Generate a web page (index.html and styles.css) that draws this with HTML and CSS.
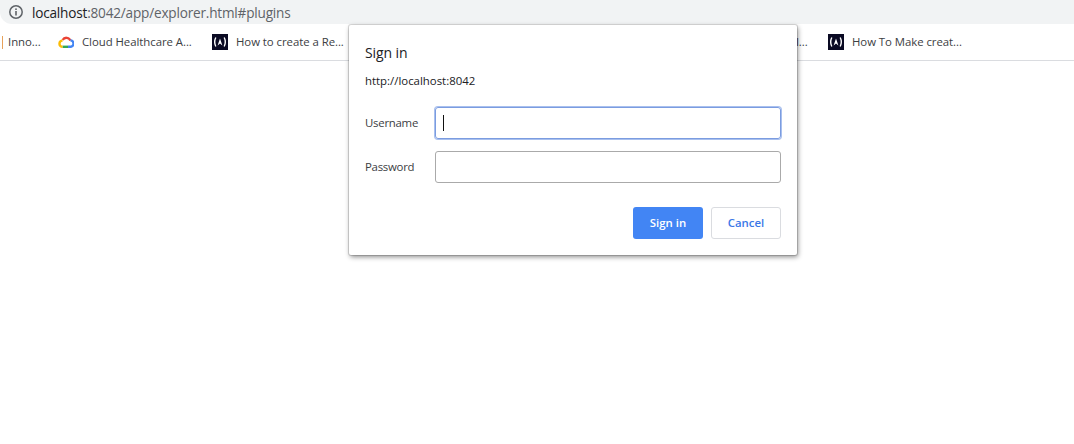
FILE: index.html
```html
<!DOCTYPE html>
<html lang="en">
<head>
<meta charset="utf-8">
<title>Sign in</title>
<link rel="stylesheet" href="styles.css">
</head>
<body>
<header class="chrome">
  <div class="omnibox">
    <svg class="info" width="16" height="16" viewBox="0 0 16 16" aria-hidden="true">
      <circle cx="8" cy="8" r="6.2" fill="none" stroke="#5f6368" stroke-width="1.5"/>
      <rect x="7.2" y="7" width="1.6" height="4.5" fill="#5f6368"/>
      <rect x="7.2" y="4.4" width="1.6" height="1.6" fill="#5f6368"/>
    </svg>
    <span class="url"><span class="host">localhost</span>:8042/app/explorer.html#plugins</span>
  </div>
  <nav class="bookmarks">
    <span class="bm bm-first"><span class="bar"></span><span class="bm-text">Inno...</span></span>
    <span class="bm bm-cloud">
      <svg width="16" height="16" viewBox="0 0 16 16" aria-hidden="true">
        <path d="M4.6 6 A4.4 4.4 0 0 1 12.4 6.4" fill="none" stroke="#ea4335" stroke-width="2.4"/>
        <path d="M12.4 6.4 A3.2 3.2 0 0 1 12.2 12.8 L10 12.8" fill="none" stroke="#4285f4" stroke-width="2.4"/>
        <path d="M10 12.8 L4.5 12.8" fill="none" stroke="#34a853" stroke-width="2.4"/>
        <path d="M4.5 12.8 A3.1 3.1 0 0 1 4.6 6.6" fill="none" stroke="#fbbc05" stroke-width="2.4"/>
      </svg>
      <span class="bm-text">Cloud Healthcare A...</span>
    </span>
    <span class="bm bm-fcc">
      <svg class="fcc" width="16" height="16" viewBox="0 0 16 16" aria-hidden="true">
        <rect width="16" height="16" fill="#0a0a23"/>
        <path d="M3.8 3.5 Q1.6 8 3.8 12.5 M12.2 3.5 Q14.4 8 12.2 12.5" fill="none" stroke="#fff" stroke-width="1.4"/>
        <path d="M5.6 11.5 L8 4.5 L10.4 11.5 L8 9.4 Z" fill="#fff"/>
      </svg>
      <span class="bm-text">How to create a Re...</span>
    </span>
    <span class="bm bm-cut"><span class="bm-text">l...</span></span>
    <span class="bm bm-last">
      <svg class="fcc" width="16" height="16" viewBox="0 0 16 16" aria-hidden="true">
        <rect width="16" height="16" fill="#0a0a23"/>
        <path d="M3.8 3.5 Q1.6 8 3.8 12.5 M12.2 3.5 Q14.4 8 12.2 12.5" fill="none" stroke="#fff" stroke-width="1.4"/>
        <path d="M5.6 11.5 L8 4.5 L10.4 11.5 L8 9.4 Z" fill="#fff"/>
      </svg>
      <span class="bm-text">How To Make creat...</span>
    </span>
  </nav>
</header>

<form class="dialog">
  <h1 class="title">Sign in</h1>
  <p class="origin">http://localhost:8042</p>
  <div class="row row-user">
    <label class="label" for="u">Username</label>
    <div class="field field-focus" id="u"><span class="caret"></span></div>
  </div>
  <div class="row row-pass">
    <label class="label" for="p">Password</label>
    <div class="field" id="p"></div>
  </div>
  <div class="actions">
    <span class="btn btn-primary">Sign in</span>
    <span class="btn btn-secondary">Cancel</span>
  </div>
</form>
</body>
</html>
```
FILE: styles.css
```css
html, body {
  margin: 0;
  padding: 0;
  background: #fff;
  height: 444px;
  overflow: hidden;
  font-family: "Open Sans", "Noto Sans", sans-serif;
}
.chrome {
  height: 61px;
  box-sizing: border-box;
  border-bottom: 1px solid #dadce0;
}
.omnibox {
  height: 24px;
  background: #f1f3f4;
  border-bottom-left-radius: 12px;
  display: flex;
  align-items: center;
  padding-left: 8px;
  box-sizing: border-box;
}
.url {
  margin-left: 8px;
  font-size: 13.6px;
  letter-spacing: -0.2px;
  color: #5f6368;
  white-space: nowrap;
}
.host { color: #202124; }
.bookmarks {
  height: 36px;
  display: flex;
  align-items: center;
  font-size: 11.4px;
  color: #3c4043;
  white-space: nowrap;
  letter-spacing: -0.05px;
}
.bm {
  display: flex;
  align-items: center;
  gap: 8px;
  flex: none;
}
.bm-text { margin-bottom: 2px; }
.bm-first { width: 58px; padding-left: 2px; gap: 5px; box-sizing: border-box; }
.bar { width: 1px; height: 13px; background: #e8a25a; }
.bm-cloud { width: 154px; }
.bm-fcc { width: 584px; }
.bm-cut { width: 32px; }
.dialog {
  position: absolute;
  left: 349px;
  top: 25px;
  width: 448px;
  height: 230px;
  box-sizing: border-box;
  background: #fff;
  border-radius: 2px;
  box-shadow: 0 0 0 1px rgba(0,0,0,.13), 1px 2px 5px rgba(0,0,0,.45);
  padding: 0 16px;
  color: #202124;
}
.title {
  margin: 18px 0 0;
  font-size: 14px;
  line-height: 20px;
  font-weight: 400;
  letter-spacing: -0.1px;
}
.origin {
  margin: 10px 0 0;
  font-size: 11.4px;
  line-height: 16px;
}
.row {
  display: flex;
  align-items: center;
  height: 32px;
}
.row-user { margin-top: 18px; }
.row-pass { margin-top: 12px; }
.label {
  width: 70px;
  flex: none;
  margin-bottom: 2px;
  font-size: 11.4px;
  letter-spacing: -0.25px;
  color: #3c4043;
}
.field {
  width: 346px;
  height: 32px;
  box-sizing: border-box;
  border: 1px solid #aaa;
  border-radius: 3px;
  display: flex;
  align-items: center;
  padding-left: 7px;
}
.field-focus {
  border-color: #7b9ce0;
  box-shadow: 0 0 0 1px #a9c0ee;
}
.caret {
  width: 1px;
  height: 16px;
  background: #111;
}
.actions {
  display: flex;
  justify-content: flex-end;
  gap: 8px;
  margin-top: 24px;
}
.btn {
  width: 70px;
  height: 32px;
  box-sizing: border-box;
  border-radius: 3px;
  padding-bottom: 2px;
  display: flex;
  align-items: center;
  justify-content: center;
  font-size: 11.4px;
  font-weight: 600;
}
.btn-primary { background: #4285f4; color: #fff; }
.btn-secondary { background: #fff; color: #3b78e7; border: 1px solid #dadce0; }
```
